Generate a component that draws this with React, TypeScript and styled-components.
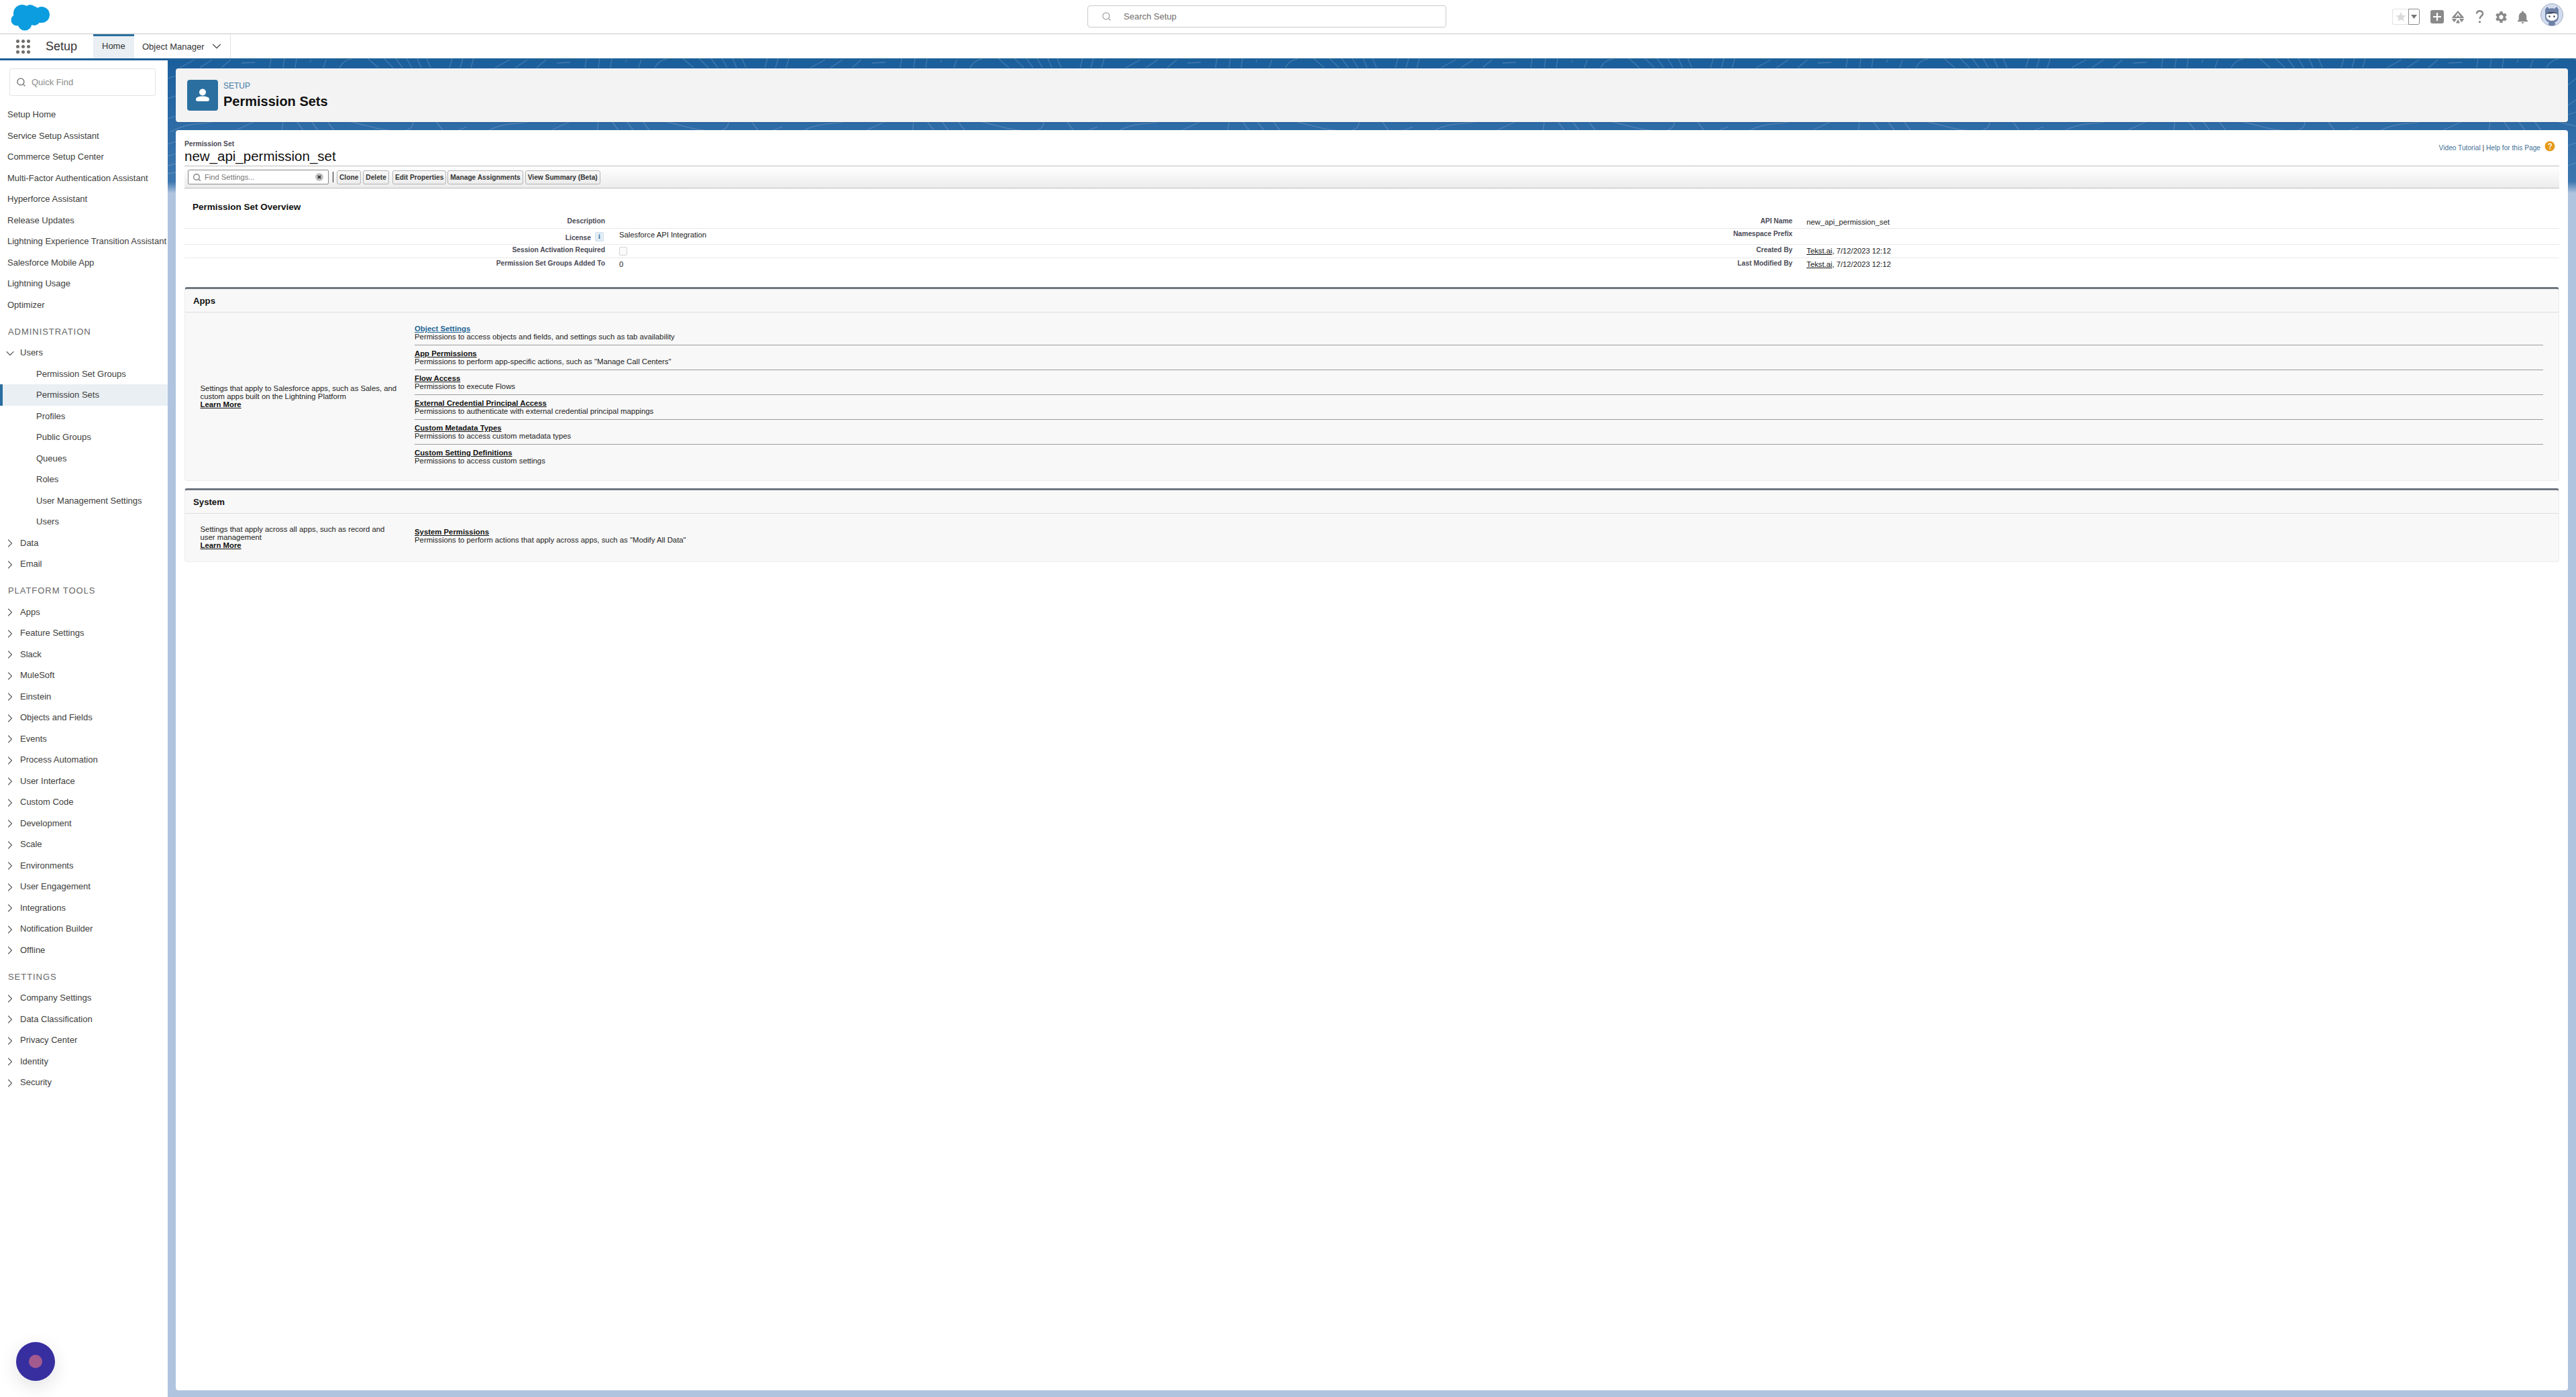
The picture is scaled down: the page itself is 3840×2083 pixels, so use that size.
import React from 'react';
import styled, { createGlobalStyle } from 'styled-components';
import { ChevronDown, ChevronRight, Search } from 'lucide-react';
import { MdNotifications, MdSettings } from 'react-icons/md';

const GlobalStyle = createGlobalStyle`
  html, body {
    margin: 0;
    padding: 0;
    background: #fff;
  }
  body {
    font-family: 'Liberation Sans', Arial, sans-serif;
    color: #111;
  }
  * {
    box-sizing: border-box;
  }
`;

const Page = styled.div`
  position: relative;
  width: 3840px;
  height: 2083px;
  display: flex;
  flex-direction: column;
  overflow: hidden;
`;

const TopBar = styled.header`
  height: 51px;
  flex: none;
  display: grid;
  grid-template-columns: 1621px 535px 1fr;
  align-items: start;
  border-bottom: 1px solid #c9c9c9;
`;

const LogoWrap = styled.div`
  padding: 5px 0 0 16px;
  line-height: 0;
`;

const GlobalSearch = styled.div`
  height: 33px;
  margin-top: 8px;
  display: flex;
  align-items: center;
  padding-left: 20px;
  gap: 18px;
  border: 1px solid #c9c9c9;
  border-radius: 4px;
  font-size: 13px;
  color: #706e6b;
`;

const TopActions = styled.div`
  display: flex;
  align-items: flex-start;
  justify-content: flex-end;
  padding: 5px 19px 0 0;
  height: 50px;
`;

const FavGroup = styled.div`
  display: flex;
  margin: 8px 11px 0 0;
`;

const FavStar = styled.div`
  width: 24px;
  height: 24px;
  display: flex;
  align-items: center;
  justify-content: center;
  border: 1px solid #e2e2e2;
  border-right: 0;
  border-radius: 3px 0 0 3px;
  color: #dcdcdc;
  line-height: 0;
`;

const FavCaret = styled.div`
  width: 17px;
  height: 24px;
  display: flex;
  align-items: center;
  justify-content: center;
  border: 1px solid #8a8a8a;
  border-radius: 0 3px 3px 0;
  line-height: 0;
`;

const ActionIcon = styled.div<{ $w?: number }>`
  width: ${(p) => p.$w ?? 32}px;
  height: 40px;
  display: flex;
  align-items: center;
  justify-content: center;
  color: #8a8a8a;
  line-height: 0;
`;

const AvatarWrap = styled.div`
  margin-left: 11px;
  line-height: 0;
`;

const NavBar = styled.nav`
  height: 39px;
  flex: none;
  display: flex;
  border-bottom: 3px solid #1d6097;
`;

const AppGrid = styled.div`
  display: grid;
  grid-template-columns: repeat(3, 5px);
  grid-auto-rows: 5px;
  align-content: start;
  gap: 3px;
  padding: 8px 0 0 24px;
  width: 68px;
`;

const Dot = styled.span`
  width: 5px;
  height: 5px;
  border-radius: 50%;
  background: #706e6b;
`;

const AppName = styled.div`
  width: 71px;
  font-size: 18px;
  line-height: 36px;
  color: #333;
`;

const HomeTab = styled.div`
  width: 61px;
  padding-left: 13px;
  font-size: 13px;
  line-height: 30px;
  color: #333;
  background: #e9eff3;
  border-top: 3px solid #2a6f9f;
`;

const ManagerTab = styled.div`
  width: 144px;
  display: flex;
  align-items: center;
  padding-left: 12px;
  font-size: 13px;
  color: #333;
  border-right: 1px solid #e2e2e2;
  svg {
    margin-left: 7px;
    color: #555;
  }
`;

const Body = styled.div`
  flex: 1;
  min-height: 0;
  display: flex;
`;

const Sidebar = styled.aside`
  width: 250px;
  flex: none;
  padding-top: 12px;
  background: #fff;
`;

const QuickFind = styled.div`
  width: 218px;
  height: 41px;
  margin: 0 0 12px 14px;
  display: flex;
  align-items: center;
  gap: 8px;
  padding-left: 9px;
  border: 1px solid #e4e4e4;
  border-radius: 3px;
  font-size: 13px;
  color: #8a8a8a;
  svg {
    color: #666;
  }
`;

const NavItem = styled.div<{ $level?: number; $active?: boolean }>`
  height: 31.5px;
  display: flex;
  align-items: center;
  font-size: 13px;
  white-space: nowrap;
  color: #3e3e3c;
  padding-left: ${(p) => (p.$level === 2 ? 54 : 11)}px;
  background: ${(p) => (p.$active ? '#e9eff3' : 'transparent')};
  box-shadow: ${(p) => (p.$active ? 'inset 4px 0 0 #2a6f9f' : 'none')};
`;

const NavGroup = styled(NavItem)`
  padding-left: 5px;
  svg {
    flex: none;
    width: 20px;
    height: 20px;
    margin: 2px 5px 0 0;
    color: #666;
    stroke-width: 1.5;
  }
`;

const NavHeading = styled.div`
  height: 40px;
  padding: 8px 0 0 12px;
  display: flex;
  align-items: center;
  font-size: 13px;
  letter-spacing: 0.95px;
  color: #666;
`;

const Content = styled.main`
  position: relative;
  flex: 1;
  min-width: 0;
  display: flex;
  flex-direction: column;
  gap: 12px;
  padding: 12px 12px 10px;
  background: linear-gradient(180deg, #1b5e9c 0, #3d77b0 181px, #b0c4df 198px);
`;

const Topo = styled.svg`
  position: absolute;
  left: 0;
  top: -3px;
  width: 100%;
  height: 198px;
`;

const HeaderCard = styled.section`
  position: relative;
  height: 80px;
  flex: none;
  display: flex;
  align-items: center;
  gap: 8px;
  padding-left: 17px;
  background: #f3f3f3;
  border-radius: 4px;
  box-shadow: 0 1px 1px rgba(0, 0, 0, 0.12);
`;

const HeaderIcon = styled.div`
  width: 46px;
  height: 46px;
  display: flex;
  align-items: center;
  justify-content: center;
  background: #2a6f9f;
  border-radius: 4px;
  line-height: 0;
`;

const HeaderEyebrow = styled.div`
  font-size: 12px;
  line-height: 14px;
  color: #3f7aa5;
  margin-bottom: 4px;
`;

const HeaderTitle = styled.h1`
  margin: 0;
  font-size: 20px;
  line-height: 24px;
  font-weight: 700;
  color: #111;
`;

const MainCard = styled.section`
  position: relative;
  flex: 1;
  min-height: 0;
  padding: 15px 13px 0;
  background: #fff;
  border-radius: 4px;
`;

const PageTitleRow = styled.div`
  height: 38px;
  display: flex;
  justify-content: space-between;
`;

const PageType = styled.div`
  font-size: 10.25px;
  font-weight: 700;
  line-height: 12px;
  color: #4a4a56;
`;

const PageName = styled.div`
  font-size: 20.5px;
  line-height: 23px;
  color: #111;
`;

const HelpLinks = styled.div`
  display: flex;
  align-items: flex-start;
  padding: 3px 6px 0 0;
  font-size: 10.2px;
  line-height: 18px;
  color: #2f3338;
  white-space: pre;
  a {
    color: #3f7095;
  }
  svg {
    margin: -2px 0 0 6px;
  }
`;

const Toolbar = styled.div`
  height: 34px;
  display: flex;
  align-items: center;
  padding-left: 5px;
  border-top: 1px solid #bdbdbd;
  border-bottom: 1px solid #bdbdbd;
  background: linear-gradient(180deg, #fff 0, #ececec 100%);
`;

const FindBox = styled.div`
  position: relative;
  width: 210px;
  height: 22px;
  display: flex;
  align-items: center;
  gap: 5px;
  padding-left: 6px;
  background: #fff;
  border: 1px solid #8a8a8a;
  border-radius: 2px;
  font-size: 11.2px;
  color: #777;
  svg {
    color: #8f8f8f;
  }
`;

const ClearIcon = styled.svg`
  position: absolute;
  right: 7px;
  top: 4px;
`;

const ToolDivider = styled.span`
  width: 1px;
  height: 16px;
  margin: 0 5px 0 6px;
  background: #222;
`;

const ToolButton = styled.button<{ $gap?: number }>`
  height: 21px;
  margin-right: ${(p) => p.$gap ?? 3}px;
  padding: 0 3px;
  font-family: inherit;
  font-size: 10.2px;
  font-weight: 700;
  color: #333;
  border: 1px solid #b5b5b5;
  border-radius: 3px;
  background: linear-gradient(180deg, #f8f8f8, #ececec);
  white-space: nowrap;
`;

const OverviewTitle = styled.h2`
  margin: 20px 0 5px 12px;
  font-size: 13.5px;
  line-height: 16px;
  font-weight: 700;
  color: #111;
`;

const DetailRow = styled.div<{ $h: number; $last?: boolean }>`
  height: ${(p) => p.$h}px;
  display: grid;
  grid-template-columns: 631px 994px 776px 1fr;
  border-bottom: ${(p) => (p.$last ? '0' : '1px solid #e8e8e8')};
`;

const Label = styled.div`
  padding: 2px 4px 0 0;
  font-size: 10.25px;
  font-weight: 700;
  line-height: 12px;
  text-align: right;
  color: #4a4a56;
`;

const LicenseLabel = styled(Label)`
  display: flex;
  justify-content: flex-end;
  align-items: flex-end;
  padding-bottom: 3px;
  gap: 6px;
`;

const InfoBadge = styled.span`
  width: 13px;
  height: 14px;
  margin: 0 2px 1px 0;
  display: flex;
  align-items: center;
  justify-content: center;
  background: #e3edf5;
  border: 1px solid #d2dfea;
  border-radius: 2px;
  font-family: 'Liberation Serif', serif;
  font-size: 10px;
  color: #2a6f9f;
`;

const Value = styled.div`
  padding: 3px 0 0 17px;
  font-size: 11.25px;
  line-height: 12px;
  color: #222;
  a {
    color: #111;
    text-decoration: underline;
  }
`;

const CheckBox = styled.span`
  display: block;
  width: 12px;
  height: 13px;
  border: 1px solid #d5d5d5;
  border-radius: 2px;
  background: #fafafa;
`;

const Section = styled.section<{ $top: number }>`
  margin-top: ${(p) => p.$top}px;
  background: #f8f8f8;
  border: 1px solid #ececec;
  border-top: 3px solid #6f7682;
  border-radius: 4px;
`;

const SectionHead = styled.h3`
  height: 35px;
  margin: 0;
  padding-left: 12px;
  display: flex;
  align-items: center;
  font-size: 13.2px;
  font-weight: 700;
  color: #111;
  border-bottom: 1px solid #dedede;
`;

const SectionBody = styled.div`
  display: flex;
  align-items: center;
`;

const SectionIntro = styled.div`
  width: 342px;
  flex: none;
  padding: 17px 24px 18px 22.5px;
  font-size: 11.35px;
  line-height: 12px;
  color: #222;
  a {
    display: block;
    font-weight: 700;
    color: #111;
    text-decoration: underline;
  }
`;

const LinkList = styled.div`
  flex: 1;
  padding: 18px 23px 23px 0;
`;

const LinkItem = styled.div`
  padding-bottom: 6px;
  margin-bottom: 6px;
  border-bottom: 1px solid #9c9c9c;
  &:last-child {
    padding-bottom: 0;
    margin-bottom: 0;
    border-bottom: 0;
  }
`;

const LinkTitle = styled.a<{ $active?: boolean }>`
  display: block;
  font-size: 11.35px;
  line-height: 12px;
  font-weight: 700;
  text-decoration: underline;
  color: ${(p) => (p.$active ? '#1f6596' : '#111')};
`;

const LinkDesc = styled.div`
  font-size: 11.35px;
  line-height: 12px;
  color: #222;
`;

const FloatButton = styled.div`
  position: absolute;
  left: 24px;
  top: 2001px;
  width: 58px;
  height: 58px;
  display: flex;
  align-items: center;
  justify-content: center;
  border-radius: 50%;
  background: #372ea0;
  box-shadow: 0 8px 28px rgba(0, 0, 0, 0.12);
  &::after {
    content: '';
    width: 20px;
    height: 20px;
    border-radius: 50%;
    background: #a35a8e;
  }
`;

const setupLinks = [
  'Setup Home',
  'Service Setup Assistant',
  'Commerce Setup Center',
  'Multi-Factor Authentication Assistant',
  'Hyperforce Assistant',
  'Release Updates',
  'Lightning Experience Transition Assistant',
  'Salesforce Mobile App',
  'Lightning Usage',
  'Optimizer',
];

const userLinks = [
  'Permission Set Groups',
  'Permission Sets',
  'Profiles',
  'Public Groups',
  'Queues',
  'Roles',
  'User Management Settings',
  'Users',
];

const platformTools = [
  'Apps',
  'Feature Settings',
  'Slack',
  'MuleSoft',
  'Einstein',
  'Objects and Fields',
  'Events',
  'Process Automation',
  'User Interface',
  'Custom Code',
  'Development',
  'Scale',
  'Environments',
  'User Engagement',
  'Integrations',
  'Notification Builder',
  'Offline',
];

const settingsLinks = ['Company Settings', 'Data Classification', 'Privacy Center', 'Identity', 'Security'];

const appLinks = [
  ['Object Settings', 'Permissions to access objects and fields, and settings such as tab availability'],
  ['App Permissions', 'Permissions to perform app-specific actions, such as "Manage Call Centers"'],
  ['Flow Access', 'Permissions to execute Flows'],
  ['External Credential Principal Access', 'Permissions to authenticate with external credential principal mappings'],
  ['Custom Metadata Types', 'Permissions to access custom metadata types'],
  ['Custom Setting Definitions', 'Permissions to access custom settings'],
];

const Logo = () => (
  <svg width="58" height="41" viewBox="0 0 58 41" fill="#0b9ddf">
    <circle cx="17" cy="15" r="13" />
    <circle cx="29" cy="11" r="9" />
    <circle cx="33" cy="14" r="10" />
    <circle cx="46" cy="17" r="12" />
    <circle cx="9" cy="25" r="8.5" />
    <circle cx="21" cy="30" r="10.5" />
    <circle cx="35" cy="24" r="9" />
    <rect x="12" y="14" width="34" height="15" />
  </svg>
);

const TrailIcon = () => (
  <svg width="20" height="20" viewBox="0 0 20 20" fill="#8a8a8a">
    <path d="M10 1 L18 10 C19 11 19 12 18 12 L2 12 C1 12 1 11 2 10 Z" />
    <path d="M1 13 L8 13 L5 18 C3 17 2 15 1 13 Z M19 13 L12 13 L15 18 C17 17 18 15 19 13 Z M7 19 L10 14 L13 19 C11 20 9 20 7 19 Z" />
    <path d="M10 4 L14 10 L12 10 L10 7 L8 10 L6 10 Z" fill="#fff" />
  </svg>
);

const HelpMark = () => (
  <svg width="13" height="20" viewBox="0 0 14 22" fill="none" stroke="#8a8a8a" strokeWidth="2.8">
    <path d="M2 6 C2 2.5 4.5 1.5 7 1.5 C10 1.5 12 3.5 12 6 C12 9.5 7 10 7 14.5" />
    <circle cx="7" cy="19.5" r="1.8" fill="#8a8a8a" stroke="none" />
  </svg>
);

const Avatar = () => (
  <svg width="34" height="34" viewBox="0 0 34 34">
    <circle cx="17" cy="17" r="16.5" fill="#d3dcee" stroke="#a3aec4" strokeWidth="1" />
    <path d="M7 9 L10 5 L13 8 C15 7 19 7 21 8 L24 5 L27 9 L27 21 C26 27 22 29 17 29 C12 29 8 27 7 21 Z" fill="#6d80a6" />
    <ellipse cx="17" cy="19" rx="8.5" ry="7" fill="#fff" />
    <path d="M9 16 C11 11 23 11 25 16 C22 14.5 20 14.5 18 15 C15 16 12 15 9 16 Z" fill="#3a4866" />
    <circle cx="13.5" cy="19.5" r="1.2" fill="#27324a" />
    <circle cx="20.5" cy="19.5" r="1.2" fill="#27324a" />
    <rect x="12" y="28" width="10" height="5" rx="2.5" fill="#6d80a6" />
  </svg>
);

const PersonIcon = () => (
  <svg width="22" height="22" viewBox="0 0 22 22" fill="#fff">
    <circle cx="11" cy="6.5" r="5" />
    <path d="M1 17 C1 14 5 12.5 11 12.5 C17 12.5 21 14 21 17 C21 19 20 20 19 20 L3 20 C2 20 1 19 1 17 Z" />
  </svg>
);

// faint contour strokes of the blue banner, repeated across the strip
const topoLines = [
  'M18 14 L40 2', 'M48 14 L66 2', 'M80 14 L94 2', 'M110 7 L130 6', 'M152 14 L154 0', 'M172 14 L174 0', 'M190 14 L192 0',
  'M212 6 L214 2', 'M232 14 L236 2', 'M256 14 C260 6 266 2 274 1', 'M298 0 L314 14', 'M322 0 L336 14', 'M340 0 L350 14',
  'M356 0 L364 14', 'M372 0 L378 14', 'M386 0 L392 14', 'M420 14 L424 0', 'M436 14 L440 0', 'M452 14 L456 0',
  'M4 110 C30 94 50 100 70 94', 'M96 110 L130 94', 'M170 110 L172 94', 'M192 94 L204 110', 'M214 94 L226 110', 'M238 94 L250 110',
  'M270 94 C300 100 320 110 352 108 C364 106 366 100 366 94', 'M400 94 L412 110', 'M426 110 L446 102',
  'M0 60 L12 56', 'M0 90 L12 86', 'M0 30 L12 26', 'M0 128 L12 124', 'M0 146 L12 142', 'M0 160 L12 157', 'M0 172 L12 170',
  'M288 40 L300 30', 'M288 70 L300 62', 'M288 84 L300 80', 'M288 130 L300 126', 'M288 160 L300 156',
];

const App: React.FC = () => (
  <Page>
    <GlobalStyle />
    <TopBar>
      <LogoWrap>
        <Logo />
      </LogoWrap>
      <GlobalSearch>
        <Search size={15} color="#a0a0a0" />
        <span>Search Setup</span>
      </GlobalSearch>
      <TopActions>
        <FavGroup>
          <FavStar>
            <svg width="16" height="16" viewBox="0 0 24 24" fill="currentColor">
              <path d="M12 1.5 L15.2 8.6 L23 9.4 L17.2 14.6 L18.8 22.3 L12 18.4 L5.2 22.3 L6.8 14.6 L1 9.4 L8.8 8.6 Z" />
            </svg>
          </FavStar>
          <FavCaret>
            <svg width="9" height="6" viewBox="0 0 9 6" fill="#777">
              <path d="M0 0 H9 L4.5 6 Z" />
            </svg>
          </FavCaret>
        </FavGroup>
        <ActionIcon $w={30}>
          <svg width="20" height="20" viewBox="0 0 20 20">
            <rect width="20" height="20" rx="3" fill="#8a8a8a" />
            <path d="M10 4 V16 M4 10 H16" stroke="#fff" strokeWidth="2.2" />
          </svg>
        </ActionIcon>
        <ActionIcon>
          <TrailIcon />
        </ActionIcon>
        <ActionIcon>
          <HelpMark />
        </ActionIcon>
        <ActionIcon>
          <MdSettings size={21} />
        </ActionIcon>
        <ActionIcon>
          <MdNotifications size={23} />
        </ActionIcon>
        <AvatarWrap>
          <Avatar />
        </AvatarWrap>
      </TopActions>
    </TopBar>

    <NavBar>
      <AppGrid>
        {Array.from({ length: 9 }).map((_, i) => (
          <Dot key={i} />
        ))}
      </AppGrid>
      <AppName>Setup</AppName>
      <HomeTab>Home</HomeTab>
      <ManagerTab>
        Object Manager
        <ChevronDown size={22} strokeWidth={1.5} />
      </ManagerTab>
    </NavBar>

    <Body>
      <Sidebar>
        <QuickFind>
          <Search size={15} />
          <span>Quick Find</span>
        </QuickFind>
        {setupLinks.map((l) => (
          <NavItem key={l}>{l}</NavItem>
        ))}
        <NavHeading>ADMINISTRATION</NavHeading>
        <NavGroup>
          <ChevronDown />
          Users
        </NavGroup>
        {userLinks.map((l) => (
          <NavItem key={l} $level={2} $active={l === 'Permission Sets'}>
            {l}
          </NavItem>
        ))}
        {['Data', 'Email'].map((l) => (
          <NavGroup key={l}>
            <ChevronRight />
            {l}
          </NavGroup>
        ))}
        <NavHeading>PLATFORM TOOLS</NavHeading>
        {platformTools.map((l) => (
          <NavGroup key={l}>
            <ChevronRight />
            {l}
          </NavGroup>
        ))}
        <NavHeading>SETTINGS</NavHeading>
        {settingsLinks.map((l) => (
          <NavGroup key={l}>
            <ChevronRight />
            {l}
          </NavGroup>
        ))}
      </Sidebar>

      <Content>
        <Topo aria-hidden="true">
          <defs>
            <pattern id="topo" width="470" height="198" patternUnits="userSpaceOnUse">
              <g fill="none" stroke="rgba(255,255,255,0.16)" strokeWidth="1.3">
                {topoLines.map((d) => (
                  <path key={d} d={d} />
                ))}
              </g>
            </pattern>
          </defs>
          <rect width="100%" height="100%" fill="url(#topo)" />
        </Topo>

        <HeaderCard>
          <HeaderIcon>
            <PersonIcon />
          </HeaderIcon>
          <div>
            <HeaderEyebrow>SETUP</HeaderEyebrow>
            <HeaderTitle>Permission Sets</HeaderTitle>
          </div>
        </HeaderCard>

        <MainCard>
          <PageTitleRow>
            <div>
              <PageType>Permission Set</PageType>
              <PageName>new_api_permission_set</PageName>
            </div>
            <HelpLinks>
              <a>Video Tutorial</a> | <a>Help for this Page</a>
              <svg width="16" height="16" viewBox="0 0 16 16">
                <circle cx="8" cy="8" r="7.5" fill="#e59a1c" />
                <path d="M5.8 6 C5.8 3.8 10.2 3.8 10.2 6 C10.2 7.6 8 7.6 8 9.4" fill="none" stroke="#fff" strokeWidth="1.5" />
                <circle cx="8" cy="11.6" r="1" fill="#fff" />
              </svg>
            </HelpLinks>
          </PageTitleRow>

          <Toolbar>
            <FindBox>
              <Search size={13} strokeWidth={3} />
              <span>Find Settings...</span>
              <ClearIcon width="12" height="12" viewBox="0 0 12 12">
                <circle cx="6" cy="6" r="6" fill="#c4c4c4" />
                <path d="M3.8 3.8 L8.2 8.2 M8.2 3.8 L3.8 8.2" stroke="#333" strokeWidth="1.8" />
              </ClearIcon>
            </FindBox>
            <ToolDivider />
            <ToolButton>Clone</ToolButton>
            <ToolButton $gap={5}>Delete</ToolButton>
            <ToolButton $gap={2}>Edit Properties</ToolButton>
            <ToolButton>Manage Assignments</ToolButton>
            <ToolButton>View Summary (Beta)</ToolButton>
          </Toolbar>

          <OverviewTitle>Permission Set Overview</OverviewTitle>
          <DetailRow $h={19}>
            <Label>Description</Label>
            <Value />
            <Label>API Name</Label>
            <Value>new_api_permission_set</Value>
          </DetailRow>
          <DetailRow $h={24}>
            <LicenseLabel>
              License
              <InfoBadge>i</InfoBadge>
            </LicenseLabel>
            <Value>Salesforce API Integration</Value>
            <Label>Namespace Prefix</Label>
            <Value />
          </DetailRow>
          <DetailRow $h={20}>
            <Label>Session Activation Required</Label>
            <Value>
              <CheckBox />
            </Value>
            <Label>Created By</Label>
            <Value>
              <a>Tekst.ai</a>, 7/12/2023 12:12
            </Value>
          </DetailRow>
          <DetailRow $h={20} $last>
            <Label>Permission Set Groups Added To</Label>
            <Value>0</Value>
            <Label>Last Modified By</Label>
            <Value>
              <a>Tekst.ai</a>, 7/12/2023 12:12
            </Value>
          </DetailRow>

          <Section $top={23}>
            <SectionHead>Apps</SectionHead>
            <SectionBody>
              <SectionIntro>
                Settings that apply to Salesforce apps, such as Sales, and custom apps built on the Lightning Platform
                <a>Learn More</a>
              </SectionIntro>
              <LinkList>
                {appLinks.map(([title, desc], i) => (
                  <LinkItem key={title}>
                    <LinkTitle $active={i === 0}>{title}</LinkTitle>
                    <LinkDesc>{desc}</LinkDesc>
                  </LinkItem>
                ))}
              </LinkList>
            </SectionBody>
          </Section>

          <Section $top={11}>
            <SectionHead>System</SectionHead>
            <SectionBody>
              <SectionIntro>
                Settings that apply across all apps, such as record and user management
                <a>Learn More</a>
              </SectionIntro>
              <LinkList>
                <LinkItem>
                  <LinkTitle>System Permissions</LinkTitle>
                  <LinkDesc>Permissions to perform actions that apply across apps, such as "Modify All Data"</LinkDesc>
                </LinkItem>
              </LinkList>
            </SectionBody>
          </Section>
        </MainCard>
      </Content>
    </Body>

    <FloatButton />
  </Page>
);

export default App;
